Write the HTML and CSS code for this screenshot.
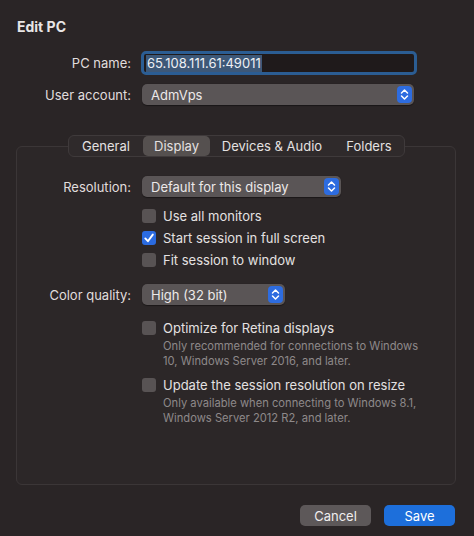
FILE: index.html
```html
<!DOCTYPE html>
<html>
<head>
<meta charset="utf-8">
<link rel="stylesheet" href="styles.css">
</head>
<body>
<div class="dialog">
  <h1 class="title">Edit PC</h1>
  <div class="form">
    <label class="lbl">PC name:</label>
    <div class="field"><span class="sel">65.108.111.61:49011</span></div>
    <label class="lbl">User account:</label>
    <div class="popup popup-account"><span>AdmVps</span><span class="stepper"><svg width="9" height="13" viewBox="0 0 9 13"><path d="M1.5 5 L4.5 2 L7.5 5 M1.5 8 L4.5 11 L7.5 8" fill="none" stroke="#fff" stroke-width="1.5" stroke-linecap="round" stroke-linejoin="round"/></svg></span></div>
  </div>

  <div class="tabs">
    <div class="tab t-general">General</div>
    <div class="tab t-display active">Display</div>
    <div class="tab t-devices">Devices &amp; Audio</div>
    <div class="tab t-folders">Folders</div>
  </div>
  <div class="box">
    <div class="grid">
      <label class="lbl">Resolution:</label>
      <div class="popup popup-res"><span>Default for this display</span><span class="stepper"><svg width="9" height="13" viewBox="0 0 9 13"><path d="M1.5 5 L4.5 2 L7.5 5 M1.5 8 L4.5 11 L7.5 8" fill="none" stroke="#fff" stroke-width="1.5" stroke-linecap="round" stroke-linejoin="round"/></svg></span></div>
      <div></div>
      <div class="checks">
        <div class="check"><span class="cb"></span><span>Use all monitors</span></div>
        <div class="check"><span class="cb on"><svg width="14" height="14" viewBox="0 0 14 14"><path d="M3.3 7.4 L5.9 10.2 L10.8 3.6" fill="none" stroke="#fff" stroke-width="1.9" stroke-linecap="round" stroke-linejoin="round"/></svg></span><span>Start session in full screen</span></div>
        <div class="check"><span class="cb"></span><span>Fit session to window</span></div>
      </div>
      <label class="lbl lbl-color">Color quality:</label>
      <div class="popup popup-color"><span>High (32 bit)</span><span class="stepper"><svg width="9" height="13" viewBox="0 0 9 13"><path d="M1.5 5 L4.5 2 L7.5 5 M1.5 8 L4.5 11 L7.5 8" fill="none" stroke="#fff" stroke-width="1.5" stroke-linecap="round" stroke-linejoin="round"/></svg></span></div>
      <div></div>
      <div class="opts">
        <div class="opt">
          <div class="check"><span class="cb"></span><span>Optimize for Retina displays</span></div>
          <p class="hint">Only recommended for connections to Windows<br>10, Windows Server 2016, and later.</p>
        </div>
        <div class="opt">
          <div class="check"><span class="cb"></span><span>Update the session resolution on resize</span></div>
          <p class="hint">Only available when connecting to Windows 8.1,<br>Windows Server 2012 R2, and later.</p>
        </div>
      </div>
    </div>
  </div>
  <div class="buttons">
    <button class="btn cancel">Cancel</button>
    <button class="btn save">Save</button>
  </div>
</div>
</body>
</html>
```

FILE: styles.css
```css
html, body {
  margin: 0;
  padding: 0;
  background: #2a2526;
  height: 100%;
}
body {
  font-family: "Inter", "Noto Sans", sans-serif;
  font-size: 13px;
  color: #e4e1e1;
}
.dialog {
  width: 474px;
  height: 536px;
  overflow: hidden;
}
.title {
  margin: 0;
  padding: 18px 0 0 17px;
  font-size: 14px;
  line-height: 17px;
  font-weight: 700;
  color: #e8e5e5;
}
.form {
  display: grid;
  grid-template-columns: 131px 1fr;
  column-gap: 10px;
  row-gap: 9px;
  align-items: center;
  margin-top: 16px;
  padding-right: 58px;
}
.lbl {
  text-align: right;
  color: #e0dddd;
  line-height: 16px;
}
.field {
  height: 24px;
  box-sizing: border-box;
  border: 3px solid #2b5d93;
  border-radius: 5px;
  background: #1f1a1b;
  padding: 0 0 0 2px;
  display: flex;
  align-items: center;
  width: 276px;
}
.sel {
  background: #3d5878;
  color: #eef0f4;
  line-height: 17px;
  padding: 0 1px;
}
.popup {
  height: 21px;
  box-sizing: border-box;
  background: #5a5556;
  border-radius: 5px;
  display: flex;
  align-items: center;
  justify-content: space-between;
  padding: 0 2px 0 9px;
  color: #ece9e9;
  box-shadow: 0 0.5px 1px rgba(0,0,0,0.4);
}
.popup-account { width: 272px; margin-left: 1px; }
.popup-res { width: 199px; }
.popup-color { width: 143px; }
.stepper {
  width: 15px;
  height: 17px;
  background: #2d6ce0;
  border-radius: 4px;
  display: flex;
  align-items: center;
  justify-content: center;
}
.stepper svg { display: block; }
.tabs {
  display: flex;
  width: 337px;
  height: 22px;
  box-sizing: border-box;
  margin: 30px 0 -11px 68px;
  position: relative;
  z-index: 1;
  background: #2f2a2b;
  border: 1px solid #3f3a3b;
  border-radius: 6px;
  padding: 0;
  align-items: center;
}
.tab {
  height: 20px;
  display: flex;
  align-items: center;
  justify-content: center;
  color: #e4e1e1;
  border-radius: 5px;
}
.t-general { width: 74px; }
.t-display { width: 67px; }
.t-devices { width: 124px; }
.t-folders { width: 70px; }
.tab.active {
  background: #55504f;
}
.box {
  margin: 0 18px 0 16px;
  height: 339px;
  box-sizing: border-box;
  border: 1px solid #3b3637;
  border-radius: 6px;
  background: #2c2728;
  padding-top: 29px;
}
.grid {
  display: grid;
  grid-template-columns: 114px 1fr;
  column-gap: 11px;
  align-items: center;
}
.checks {
  display: flex;
  flex-direction: column;
  gap: 6px;
  padding-top: 11px;
  margin-bottom: 16px;
}
.check {
  display: flex;
  align-items: center;
  gap: 7px;
  height: 16px;
  color: #e4e1e1;
}
.cb {
  width: 14px;
  height: 14px;
  border-radius: 3px;
  background: #585354;
  flex: none;
  display: flex;
  align-items: center;
  justify-content: center;
}
.cb.on { background: #2b6be0; }
.cb svg { display: block; }
.opts {
  padding-top: 15px;
  display: flex;
  flex-direction: column;
  gap: 8px;
}
.hint {
  margin: 3px 0 0 21px;
  font-size: 11.2px;
  line-height: 15px;
  color: #8e898a;
}
.buttons {
  display: flex;
  justify-content: flex-end;
  gap: 13px;
  padding: 20px 19px 0 0;
}
.btn {
  width: 71px;
  height: 21px;
  border: none;
  border-radius: 5px;
  font-family: inherit;
  font-size: 13px;
  color: #f0eeee;
  padding: 0;
}
.cancel { background: #5d5859; }
.save { background: #1d6fdb; color: #fff; }
```
